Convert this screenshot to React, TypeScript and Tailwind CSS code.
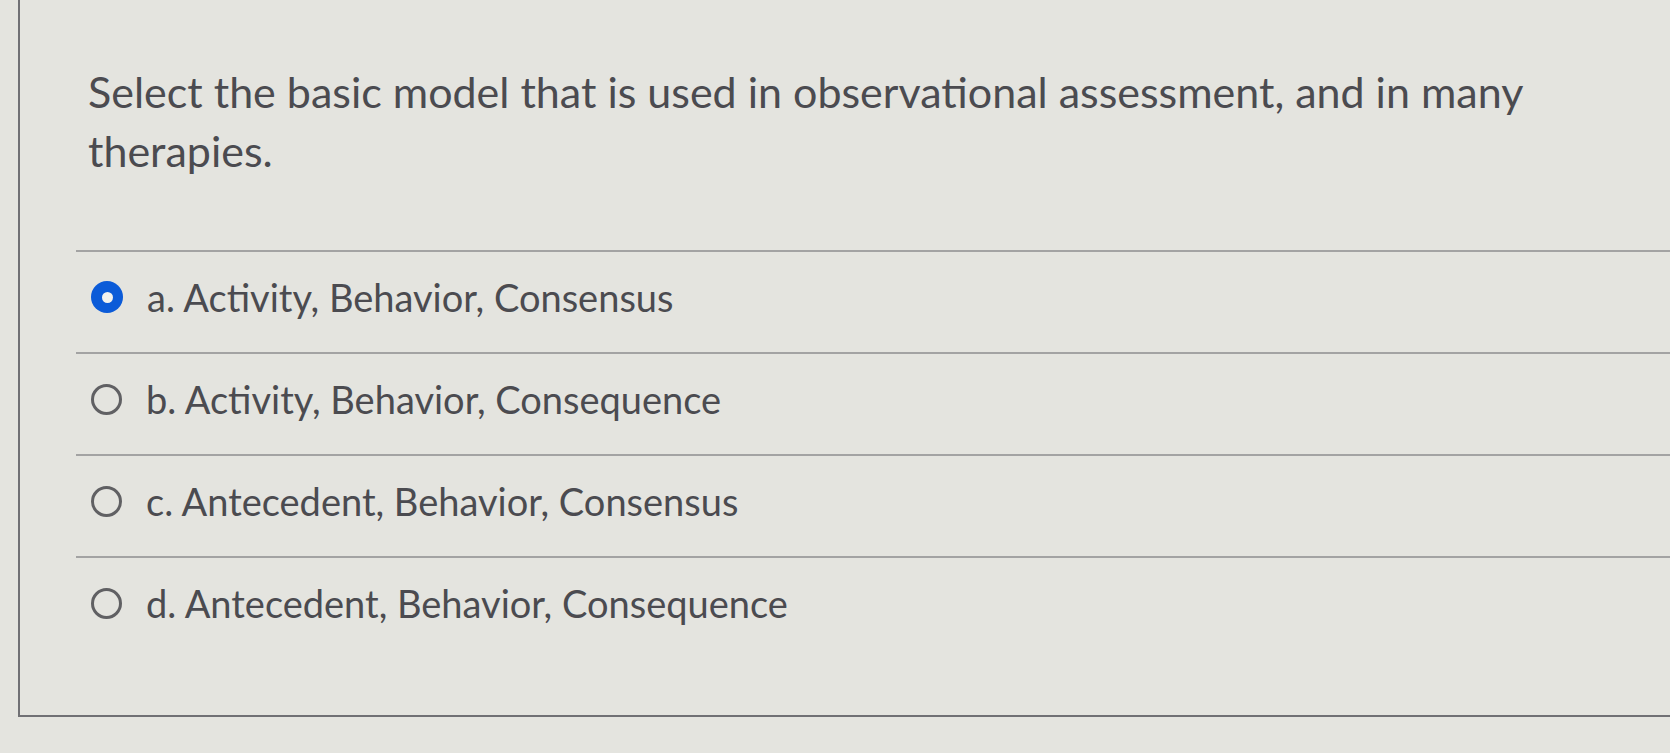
const options = [
  { key: "a", label: "a. Activity, Behavior, Consensus", checked: true },
  { key: "b", label: "b. Activity, Behavior, Consequence", checked: false },
  { key: "c", label: "c. Antecedent, Behavior, Consensus", checked: false },
  { key: "d", label: "d. Antecedent, Behavior, Consequence", checked: false },
];

function Radio({ checked }: { checked: boolean }) {
  if (checked) {
    return (
      <span className="flex h-[32px] w-[32px] shrink-0 items-center justify-center rounded-full bg-[#0b5bd8]">
        <span className="h-[11px] w-[11px] rounded-full bg-[#f2f2ee]" />
      </span>
    );
  }
  return <span className="h-[31px] w-[31px] shrink-0 rounded-full border-[3px] border-[#606063]" />;
}

export default function App() {
  return (
    <div className="h-[753px] w-full overflow-hidden bg-[#e4e4df] font-['Lato','Open_Sans',sans-serif] text-[#4b4b50]">
      <div className="ml-[18px] h-[717px] border-b-2 border-l-2 border-[#707074]">
        <div className="pl-[68px] pr-10 pt-[62px] text-[43px] leading-[59px]">
          Select the basic model that is used in observational assessment, and in many therapies.
        </div>
        <div className="ml-[56px] mt-[70px]">
          {options.map((o) => (
            <div key={o.key} className="flex h-[102px] items-center gap-[24px] border-t-2 border-[#a3a3a3] pl-[15px] pb-[10px]">
              <Radio checked={o.checked} />
              <span className="text-[38px] leading-none">{o.label}</span>
            </div>
          ))}
        </div>
      </div>
    </div>
  );
}
